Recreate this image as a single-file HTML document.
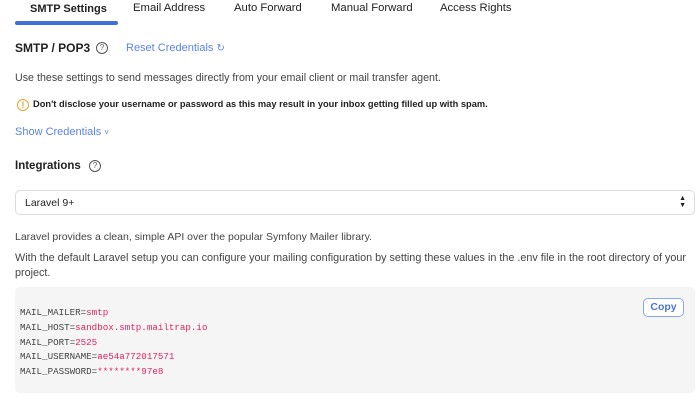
<!DOCTYPE html>
<html><head><meta charset="utf-8"><style>
*{margin:0;padding:0;box-sizing:border-box}
body{width:700px;height:400px;overflow:hidden;background:#fff;font-family:"Liberation Sans",sans-serif;color:#333;position:relative}
.a{position:absolute;white-space:nowrap}
.tab{top:2px;font-size:11.3px;color:#222}
.mono{font-family:"Liberation Mono",monospace;font-size:9.2px;color:#444}
.mono b{font-weight:normal;color:#e0245e}
.q{width:12px;height:12px;border:1.2px solid #555;border-radius:50%;font-size:8px;text-align:center;line-height:10px;color:#555}
</style></head><body>
<div class="a tab" style="left:30px;font-weight:bold;font-size:11px;top:3px">SMTP Settings</div>
<div class="a tab" style="left:133px">Email Address</div>
<div class="a tab" style="left:234px">Auto Forward</div>
<div class="a tab" style="left:331px">Manual Forward</div>
<div class="a tab" style="left:440px">Access Rights</div>
<div class="a" style="left:15px;top:21px;width:103px;height:4px;border-radius:2px;background:#3f6fd8"></div>
<div class="a" style="left:15px;top:41px;font-size:12px;font-weight:bold;color:#222">SMTP / POP3</div>
<div class="a q" style="left:96px;top:42px">?</div>
<div class="a" style="left:126px;top:42px;font-size:11px;color:#5b84e6">Reset Credentials <span style="font-size:10px">↻</span></div>
<div class="a" style="left:15px;top:72px;font-size:10.7px;color:#444">Use these settings to send messages directly from your email client or mail transfer agent.</div>
<div class="a" style="left:17px;top:99px;width:12px;height:12px;border:1.3px solid #f0a020;border-radius:50%;font-size:9px;text-align:center;line-height:10px;color:#f0a020;font-weight:bold">!</div>
<div class="a" style="left:33px;top:99px;font-size:9.3px;font-weight:bold;color:#222">Don't disclose your username or password as this may result in your inbox getting filled up with spam.</div>
<div class="a" style="left:15px;top:126px;font-size:11px;color:#5b84e6">Show Credentials <span style="font-size:8px">˅</span></div>
<div class="a" style="left:15px;top:160px;font-size:11.5px;font-weight:bold;color:#222">Integrations</div>
<div class="a q" style="left:89px;top:160px">?</div>
<div class="a" style="left:15px;top:190px;width:680px;height:25px;border:1px solid #ddd;border-radius:5px;font-size:10.5px;color:#222;padding:6px 0 0 9px">Laravel 9+<span style="position:absolute;right:8px;top:4px;font-size:7px;line-height:7px">▲<br>▼</span></div>
<div class="a" style="left:15px;top:231px;font-size:10.5px;color:#444">Laravel provides a clean, simple API over the popular Symfony Mailer library.</div>
<div class="a" style="left:15px;top:251px;font-size:10.8px;color:#444;line-height:15px;white-space:normal;width:685px">With the default Laravel setup you can configure your mailing configuration by setting these values in the .env file in the root directory of your project.</div>
<div class="a" style="left:15px;top:287px;width:680px;height:106px;background:#f5f5f5;border-radius:5px"></div>
<div class="a" style="left:643px;top:298px;width:41px;height:19px;border:1px solid #8aa8ee;border-radius:5px;background:#fff;color:#4a74d9;font-size:10.5px;font-weight:bold;text-align:center;line-height:17px">Copy</div>
<div class="a mono" style="left:20px;top:306px;line-height:14.8px">MAIL_MAILER=<b>smtp</b><br>MAIL_HOST=<b>sandbox.smtp.mailtrap.io</b><br>MAIL_PORT=<b>2525</b><br>MAIL_USERNAME=<b>ae54a772017571</b><br>MAIL_PASSWORD=<b>********97e8</b></div>
</body></html>
